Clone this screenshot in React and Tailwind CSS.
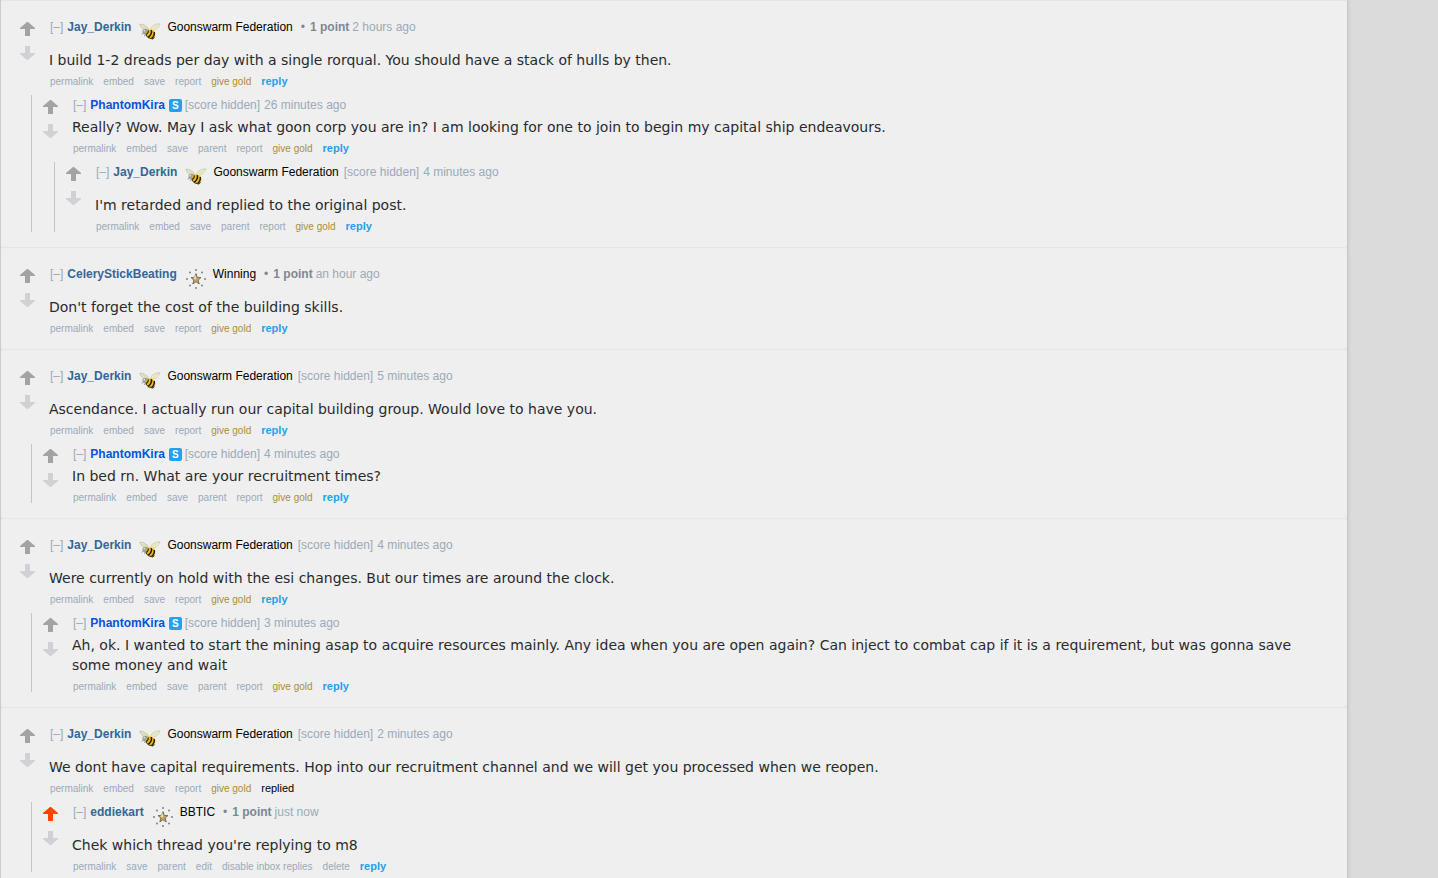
import React from "react";

const threads = [
  {
    user: "Jay_Derkin", flair: "Goonswarm Federation", icon: "bee", points: "1 point", age: "2 hours ago",
    body: "I build 1-2 dreads per day with a single rorqual. You should have a stack of hulls by then.",
    children: [
      {
        user: "PhantomKira", submitter: true, age: "26 minutes ago",
        body: "Really? Wow. May I ask what goon corp you are in? I am looking for one to join to begin my capital ship endeavours.",
        children: [
          {
            user: "Jay_Derkin", flair: "Goonswarm Federation", icon: "bee", age: "4 minutes ago",
            body: "I'm retarded and replied to the original post.",
          },
        ],
      },
    ],
  },
  {
    user: "CeleryStickBeating", flair: "Winning", icon: "star", points: "1 point", age: "an hour ago",
    body: "Don't forget the cost of the building skills.",
  },
  {
    user: "Jay_Derkin", flair: "Goonswarm Federation", icon: "bee", age: "5 minutes ago",
    body: "Ascendance. I actually run our capital building group. Would love to have you.",
    children: [
      { user: "PhantomKira", submitter: true, age: "4 minutes ago", body: "In bed rn. What are your recruitment times?" },
    ],
  },
  {
    user: "Jay_Derkin", flair: "Goonswarm Federation", icon: "bee", age: "4 minutes ago",
    body: "Were currently on hold with the esi changes. But our times are around the clock.",
    children: [
      {
        user: "PhantomKira", submitter: true, age: "3 minutes ago",
        body: "Ah, ok. I wanted to start the mining asap to acquire resources mainly. Any idea when you are open again? Can inject to combat cap if it is a requirement, but was gonna save some money and wait",
      },
    ],
  },
  {
    user: "Jay_Derkin", flair: "Goonswarm Federation", icon: "bee", age: "2 minutes ago", replied: true,
    body: "We dont have capital requirements. Hop into our recruitment channel and we will get you processed when we reopen.",
    children: [
      {
        user: "eddiekart", flair: "BBTIC", icon: "star", points: "1 point", age: "just now", own: true, upvoted: true,
        body: "Chek which thread you're replying to m8",
      },
    ],
  },
];

function Bee() {
  return (
    <svg width="22" height="20" viewBox="0 0 22 20" aria-hidden="true" className="block">
      <path d="M0.8 2.2 4 2.4 8 4.8 10.3 8.5 9 9.5 5.5 8 2.2 5.2Z" fill="#e6e6bd" stroke="#b5b594" strokeWidth="0.6" />
      <path d="M21 1.8 17 2.2 13 4.6 11 8.5 13 9 17 7.2 19.5 4.6Z" fill="#efefc9" stroke="#bdbd98" strokeWidth="0.6" />
      <path d="M4 4 8.5 7.6M18.5 3.2 13 7.4" stroke="#cfcf9f" strokeWidth="0.6" />
      <ellipse cx="6.4" cy="9.4" rx="3" ry="2.6" fill="#9a9ea2" />
      <path d="M4 11 3 12.6M6.4 12 5.4 14" stroke="#777" strokeWidth="0.7" />
      <ellipse cx="11.6" cy="12.2" rx="5" ry="4.4" transform="rotate(35 11.6 12.2)" fill="#eebc1c" />
      <path d="M12.2 8.1Q13.6 11.6 9.2 15.4M15.2 10Q16 13.4 12.6 16.6" fill="none" stroke="#231c0b" strokeWidth="1.5" />
      <path d="M9.2 8.4Q10 10.4 7 12.8" fill="none" stroke="#3a3019" strokeWidth="1.1" />
      <path d="M6.8 12.8Q8.4 16.6 13.6 17L15.6 15.6" fill="none" stroke="#31280d" strokeWidth="0.9" />
      <circle cx="5.4" cy="8.7" r="0.9" fill="#d9dcdf" />
    </svg>
  );
}

function Star() {
  const dots = [[11, 1], [17, 3.5], [20, 10], [17, 16.5], [11, 19], [5, 16.5], [2, 10], [5, 3.5]];
  return (
    <svg width="22" height="20" viewBox="0 0 22 20" aria-hidden="true" className="block">
      {dots.map(([x, y]) => <circle key={`${x}-${y}`} cx={x} cy={y} r="1" fill="#808085" />)}
      <path d="M11 4.6 12.3 8.4 16 8.6 13.2 11 14.2 15 11 12.7 7.8 15 8.8 11 6 8.6 9.7 8.4Z" fill="#c0a566" stroke="#544c3e" strokeWidth="0.7" />
      <path d="M11 6.1V10.6L8.4 9.6Z" fill="#f1deaa" />
    </svg>
  );
}

function Arrow({ down, active }) {
  return (
    <button type="button" aria-label={down ? "downvote" : "upvote"} className={`block ${down ? "text-[#d0d1d5]" : active ? "text-[#ff4500]" : "text-[#a2a3a7]"}`}>
      <svg width="15" height="14" viewBox="0 0 15 14" fill="currentColor" className="block">
        {down ? <path d="M5 0H10V7H15V8L8 14H7L0 8V7H5Z" /> : <path d="M5 14H10V7H15V6L8 0H7L0 6V7H5Z" />}
      </svg>
    </button>
  );
}

function Actions({ c, child }) {
  const items = c.own
    ? ["permalink", "save", "parent", "edit", "disable inbox replies", "delete"]
    : ["permalink", "embed", "save", ...(child ? ["parent"] : []), "report"];
  return (
    <div className="flex gap-[10px] pt-[6px] pl-px text-[10px] leading-[11px] text-[#99aabc]">
      {items.map((t) => <a key={t} href="#">{t}</a>)}
      {!c.own && <a href="#" className="text-[#ab8e35]">give gold</a>}
      {c.replied
        ? <span className="text-[11px] text-black">replied</span>
        : <a href="#" className="text-[11px] font-bold text-[#24a0ed]">reply</a>}
    </div>
  );
}

function Comment({ c, child }) {
  return (
    <article>
      <div className="flex gap-[14px]">
        <div className="flex shrink-0 flex-col gap-[10px] pt-[5px]">
          <Arrow active={c.upvoted} />
          <Arrow down />
        </div>
        <div className="min-w-0 flex-1">
          <header className={`flex items-start pl-px text-[12px] leading-5 text-[#99aabc] ${c.flair ? "h-[33px]" : "h-[22px]"}`}>
            <button type="button" className="mr-1">[–]</button>
            <a href="#" className={`font-bold ${c.submitter ? "text-[#0055df]" : "text-[#336699]"}`}>{c.user}</a>
            {c.submitter && (
              <span className="mt-1 mr-[3px] ml-1 rounded-[2px] bg-[#24a0ed] px-[3px] text-[10px] leading-[13px] font-bold text-white">S</span>
            )}
            {c.flair && (
              <>
                <span className="mt-[5px] mr-[6px] ml-2">{c.icon === "bee" ? <Bee /> : <Star />}</span>
                <span className="mr-[5px] text-black">{c.flair}</span>
              </>
            )}
            {c.points ? (
              <>
                <span className="mr-[5px] ml-[3px] text-[#7c8894]">•</span>
                <span className="mr-[3px] font-bold text-[#7c8894]">{c.points}</span>
              </>
            ) : (
              <span className="mr-1">[score hidden]</span>
            )}
            <time>{c.age}</time>
          </header>
          <p className="font-['Verdana','DejaVu_Sans',sans-serif] text-[14px] leading-5 text-[#2a2a2e]">{c.body}</p>
          <Actions c={c} child={child} />
        </div>
      </div>
      {c.children && (
        <div className="mt-2 ml-[11px] border-l border-[#c5c5c5] pl-[11px]">
          {c.children.map((k) => <Comment key={k.body} c={k} child />)}
        </div>
      )}
    </article>
  );
}

export default function App() {
  return (
    <div className="min-h-screen bg-[#dbdbdb] pr-[91px] font-['Liberation_Sans',Arial,sans-serif]">
      <main className="min-h-screen border-l border-[#cccccc] bg-[#e2e2e2] shadow-[1px_0_3px_rgba(0,0,0,0.12)]">
        {threads.map((t) => (
          <section key={t.body} className="rounded-[3px] border-t border-[#e6e6e6] bg-[#efefef] pt-4 pr-[19px] pb-[15px] pl-[19px]">
            <Comment c={t} />
          </section>
        ))}
      </main>
    </div>
  );
}
